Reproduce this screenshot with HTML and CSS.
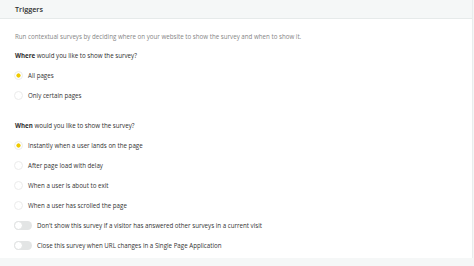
FILE: index.html
```html
<!DOCTYPE html>
<html>
<head>
<meta charset="utf-8">
<link rel="stylesheet" href="styles.css">
</head>
<body>
<div class="panel">
  <div class="panel-head">Triggers</div>
  <div class="panel-body">
    <p class="desc">Run contextual surveys by deciding where on your website to show the survey and when to show it.</p>
    <p class="question"><b>Where</b> would you like to show the survey?</p>
    <label class="row"><span class="radio on"></span>All pages</label>
    <label class="row"><span class="radio"></span>Only certain pages</label>
    <p class="question q2"><b>When</b> would you like to show the survey?</p>
    <label class="row"><span class="radio on"></span>Instantly when a user lands on the page</label>
    <label class="row"><span class="radio"></span>After page load with delay</label>
    <label class="row"><span class="radio"></span>When a user is about to exit</label>
    <label class="row"><span class="radio"></span>When a user has scrolled the page</label>
    <label class="row"><span class="toggle"></span>Don't show this survey if a visitor has answered other surveys in a current visit</label>
    <label class="row"><span class="toggle"></span>Close this survey when URL changes in a Single Page Application</label>
  </div>
</div>
</body>
</html>
```
FILE: styles.css
```css
html, body {
  margin: 0;
  padding: 0;
  background: #f5f7f7;
  font-family: "Open Sans", "Liberation Sans", sans-serif;
  color: #3a3a3a;
}
.panel {
  width: 473px;
  height: 258px;
  background: #fff;
  border-right: 1px solid #e9ecec;
  box-sizing: border-box;
}
.panel-head {
  height: 18px;
  background: #f5f7f7;
  border-bottom: 1px solid #e6eaea;
  padding-left: 15px;
  font-size: 7.2px;
  font-weight: 600;
  line-height: 19px;
  color: #2e2e2e;
}
.panel-body {
  padding: 9px 0 0 15px;
  display: flex;
  flex-direction: column;
}
.desc {
  margin: 0;
  font-size: 6.2px;
  line-height: 18px;
  color: #858585;
}
.question {
  margin: 1px 0 0;
  font-size: 6.2px;
  line-height: 18px;
  color: #2e2e2e;
}
.question b { font-weight: 700; }
.q2 { margin-top: 12px; }
.row {
  display: flex;
  align-items: center;
  height: 20px;
  font-size: 6.2px;
  color: #333;
}
.radio {
  flex: none;
  width: 9px;
  height: 9px;
  border: 1px solid #ebebeb;
  border-radius: 50%;
  box-sizing: border-box;
  margin-left: -1px;
  margin-right: 5px;
}
.radio.on {
  background: radial-gradient(circle at center, #f0ca00 0, #f0ca00 1.8px, #fff 2.4px);
}
.toggle {
  flex: none;
  position: relative;
  width: 18px;
  height: 9px;
  border-radius: 5px;
  background: #e3e5e5;
  margin-left: -1px;
  margin-right: 5px;
}
.toggle::after {
  content: "";
  position: absolute;
  left: 0;
  top: 0;
  width: 9px;
  height: 9px;
  border-radius: 50%;
  background: #fff;
  border: 1px solid #e0e2e2;
  box-sizing: border-box;
}
```
